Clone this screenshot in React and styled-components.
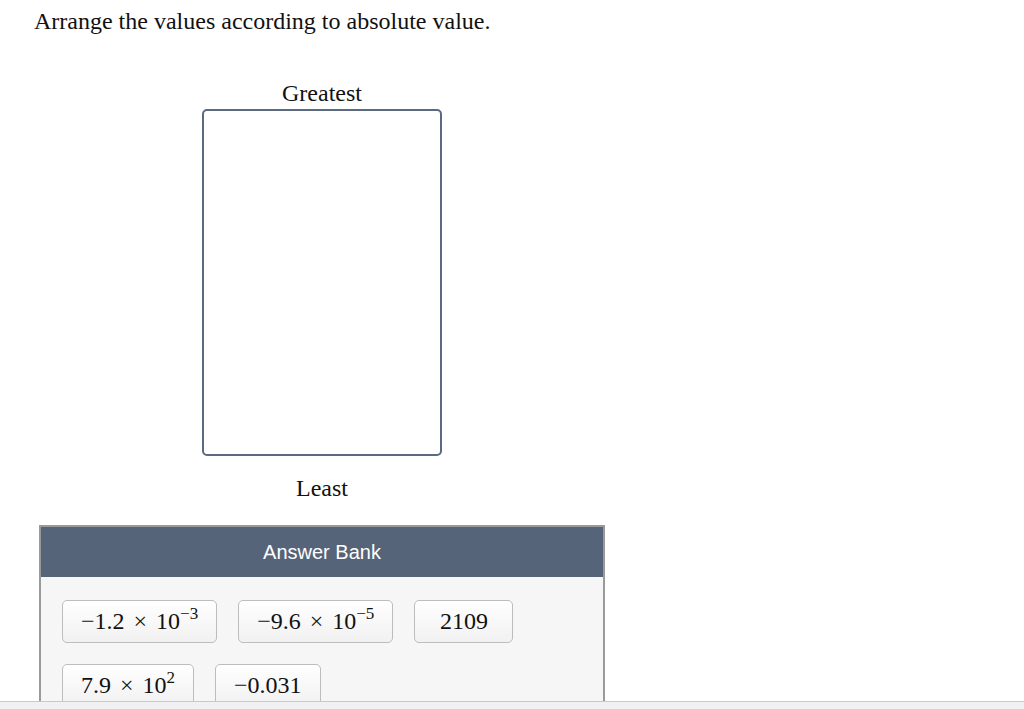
import React from 'react';
import styled, {createGlobalStyle} from 'styled-components';

const GlobalStyle = createGlobalStyle`
  html, body {
    margin: 0;
    padding: 0;
    background: #fff;
    overflow: hidden;
  }
  body {
    font-family: "Liberation Serif", "Times New Roman", serif;
    color: #111;
  }
`;

const Page = styled.div`
  height: 100vh;
  padding: 6px 0 0 34px;
  box-sizing: border-box;
`;

const Prompt = styled.p`
  margin: 0;
  font-size: 24px;
  line-height: 30px;
`;

const Workspace = styled.div`
  width: 566px;
  margin: 44px 0 0 5px;
  display: flex;
  flex-direction: column;
  align-items: center;
`;

const RankLabel = styled.div`
  font-size: 24px;
  line-height: 26px;
`;

const DropZone = styled.div`
  width: 240px;
  height: 347px;
  box-sizing: border-box;
  margin: 3px 0 19px;
  border: 2px solid #5b6a80;
  border-radius: 5px;
  background: #fff;
`;

const Bank = styled.section`
  align-self: stretch;
  margin-top: 24px;
  border: 2px solid #9a9a9a;
  background: #f6f6f6;
`;

const BankHeader = styled.div`
  height: 50px;
  display: flex;
  align-items: center;
  justify-content: center;
  background: #566479;
  color: #fff;
  font-family: "Liberation Sans", Arial, sans-serif;
  font-size: 20px;
`;

const Chips = styled.div`
  display: flex;
  flex-wrap: wrap;
  gap: 21px;
  padding: 23px 21px;
`;

const Chip = styled.button`
  height: 43px;
  min-width: 99px;
  padding: 0 18px;
  box-sizing: border-box;
  border: 1px solid #bdbdbd;
  border-radius: 5px;
  background: linear-gradient(#ffffff, #f1f1f1);
  font-family: "Liberation Serif", "Times New Roman", serif;
  font-size: 24px;
  color: #111;
  white-space: nowrap;
  cursor: pointer;
`;

const Times = styled.span`
  margin: 0 3px;
`;

const Exp = styled.sup`
  font-size: 17px;
  vertical-align: 10px;
  line-height: 0;
`;

const StatusBar = styled.div`
  position: fixed;
  left: 0;
  right: 0;
  bottom: 0;
  height: 7px;
  border-top: 1px solid #c9c9c9;
  background: #f1f1f1;
`;

const values = [
  {lead: '\u22121.2', exp: '\u22123'},
  {lead: '\u22129.6', exp: '\u22125'},
  {lead: '2109'},
  {lead: '7.9', exp: '2'},
  {lead: '\u22120.031'},
];

const App = () => {
  return (
    <Page>
      <GlobalStyle />
      <Prompt>Arrange the values according to absolute value.</Prompt>
      <Workspace>
        <RankLabel>Greatest</RankLabel>
        <DropZone />
        <RankLabel>Least</RankLabel>
        <Bank>
          <BankHeader>Answer Bank</BankHeader>
          <Chips>
            {values.map((v, i) => (
              <Chip key={i}>
                {v.lead}
                {v.exp && (
                  <>
                    {' '}<Times>{'\u00d7'}</Times>{' '}10<Exp>{v.exp}</Exp>
                  </>
                )}
              </Chip>
            ))}
          </Chips>
        </Bank>
      </Workspace>
      <StatusBar />
    </Page>
  );
};

export default App;
